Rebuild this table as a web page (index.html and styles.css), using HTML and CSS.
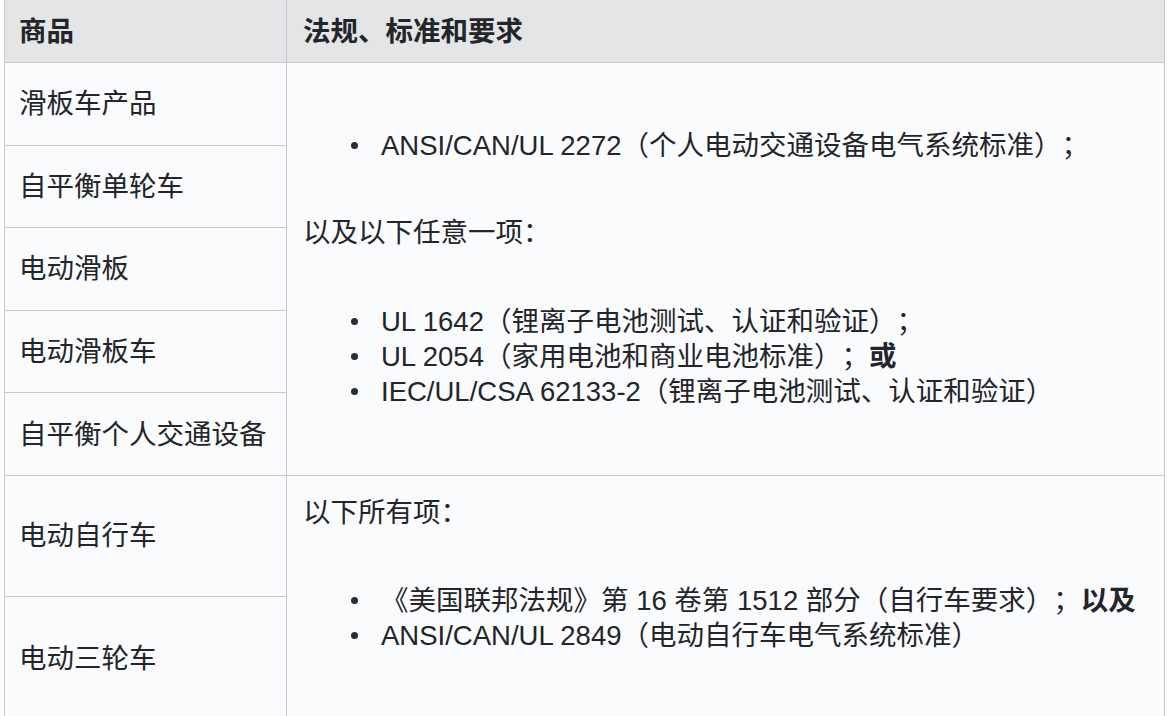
FILE: index.html
```html
<!DOCTYPE html>
<html lang="zh-CN">
<head>
<meta charset="utf-8">
<title>商品与法规</title>
<link rel="stylesheet" href="styles.css">
</head>
<body>
<table class="wikitable">
  <thead>
    <tr>
      <th class="col-item">商品</th>
      <th>法规、标准和要求</th>
    </tr>
  </thead>
  <tbody>
    <tr>
      <td>滑板车产品</td>
      <td rowspan="5" class="req">
        <ul>
          <li>ANSI/CAN/UL 2272（个人电动交通设备电气系统标准）；</li>
        </ul>
        <p>以及以下任意一项：</p>
        <ul>
          <li>UL 1642（锂离子电池测试、认证和验证）；</li>
          <li>UL 2054（家用电池和商业电池标准）；<b>或</b></li>
          <li>IEC/UL/CSA 62133-2（锂离子电池测试、认证和验证）</li>
        </ul>
      </td>
    </tr>
    <tr><td>自平衡单轮车</td></tr>
    <tr><td>电动滑板</td></tr>
    <tr><td>电动滑板车</td></tr>
    <tr><td>自平衡个人交通设备</td></tr>
    <tr class="row-a">
      <td>电动自行车</td>
      <td rowspan="2" class="req req-top">
        <p>以下所有项：</p>
        <ul>
          <li>《美国联邦法规》第 16 卷第 1512 部分（自行车要求）；<b>以及</b></li>
          <li>ANSI/CAN/UL 2849（电动自行车电气系统标准）</li>
        </ul>
      </td>
    </tr>
    <tr class="row-b"><td>电动三轮车</td></tr>
  </tbody>
</table>
</body>
</html>
```
FILE: styles.css
```css
html, body {
  margin: 0;
  padding: 0;
  background: #ffffff;
}

body {
  font-family: "Liberation Sans", "Noto Sans CJK SC", sans-serif;
  font-size: 27.5px;
  line-height: 35px;
  color: #23252a;
  overflow: hidden;
  text-spacing-trim: space-all;
}

.wikitable {
  border-collapse: collapse;
  margin: -1px 0 0 4px;
  width: 1161px;
  background: #fafbfd;
  table-layout: fixed;
}

.wikitable th,
.wikitable td {
  border: 1px solid #c6c8cc;
  text-align: left;
  padding: 23.3px 16px;
  vertical-align: middle;
}

.wikitable tr > :first-child {
  padding-left: 14px;
}

.wikitable th {
  background: #e4e5e7;
  font-weight: bold;
  padding-top: 13.5px;
  padding-bottom: 13.5px;
}

.col-item {
  width: 251px;
}

.req ul {
  list-style: none;
  margin: 0;
  padding: 0 0 0 78px;
}

.req li {
  position: relative;
  white-space: nowrap;
}

.req li::before {
  content: "";
  position: absolute;
  left: -30px;
  top: 14px;
  width: 7px;
  height: 7px;
  border-radius: 50%;
  background: #2a2d33;
}

.req p {
  margin: 52px 0 54px;
}

.wikitable .req-top {
  vertical-align: top;
  padding-top: 19px;
}

.wikitable .req-top p {
  margin: 0 0 53px;
}

.row-a td:first-child {
  height: 73px;
}

.row-b td:first-child {
  height: 77px;
}
```
